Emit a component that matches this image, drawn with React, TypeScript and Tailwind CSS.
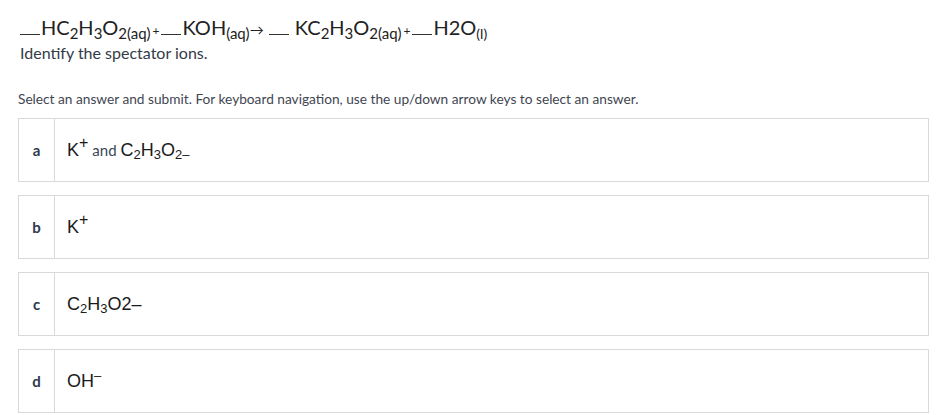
import type { ReactNode } from 'react'

const body = { fontFamily: 'Lato, "Noto Sans", sans-serif' }
const chem = { fontFamily: '"Liberation Sans", Arial, sans-serif' }

function Blank({ w = 20 }: { w?: number }) {
  return (
    <span
      className="inline-block h-[1px] bg-[#333] align-baseline mr-[1px]"
      style={{ width: w }}
    />
  )
}

function Option({ letter, children }: { letter: string; children: ReactNode }) {
  return (
    <div className="flex h-[64px] border border-[#d9d9d9] bg-white">
      <div className="w-[36px] shrink-0 border-r border-[#d9d9d9] flex items-center justify-center text-[15px] font-bold text-[#2c3a4d]">
        {letter}
      </div>
      <div className="flex items-center pl-[12px] text-[18px] text-[#1a1a1a]">{children}</div>
    </div>
  )
}

export default function App() {
  return (
    <div className="bg-white min-h-screen pl-[18px] pr-[23px] pt-[14px] text-[#333]" style={body}>
      {/* Equation */}
      <p className="pl-[2px] text-[20px] leading-[26px] text-[#222] whitespace-nowrap">
        <Blank />HC<sub>2</sub>H<sub>3</sub>O<sub className="text-[15px]">2(aq)</sub>
        <span className="text-[12px] mx-[2px]">+</span>
        <Blank />KOH<sub className="text-[15px]">(aq)</sub>
        <span className="text-[14px]">→</span> <Blank /> KC<sub>2</sub>H<sub>3</sub>O
        <sub className="text-[15px]">2(aq)</sub>
        <span className="text-[12px] mx-[2px]">+</span>
        <Blank />H2O<sub className="text-[14px]">(l)</sub>
      </p>
      <p className="pl-[2px] text-[16px] leading-[18px] text-[#333b47]">Identify the spectator ions.</p>

      <p className="mt-[28px] text-[13.7px] leading-[18px] text-[#3f4652]">
        Select an answer and submit. For keyboard navigation, use the up/down arrow keys to select an answer.
      </p>

      <div className="mt-[10px] flex flex-col gap-[13px]">
        <Option letter="a">
          <span style={chem}>
            K<sup className="text-[16px]">+</sup>
          </span>
          <span className="text-[15px] text-[#3a4658] mx-[4px]">and</span>
          <span style={chem}>
            C<sub className="text-[13px]">2</sub>H<sub className="text-[13px]">3</sub>O
            <sub className="text-[13px]">2</sub>
            <sub className="text-[13px]">–</sub>
          </span>
        </Option>
        <Option letter="b">
          <span style={chem}>
            K<sup className="text-[16px]">+</sup>
          </span>
        </Option>
        <Option letter="c">
          <span style={chem}>
            C<sub className="text-[13px]">2</sub>H<sub className="text-[13px]">3</sub>O2–
          </span>
        </Option>
        <Option letter="d">
          <span style={chem}>
            OH<sup className="text-[13px]">–</sup>
          </span>
        </Option>
      </div>
    </div>
  )
}
